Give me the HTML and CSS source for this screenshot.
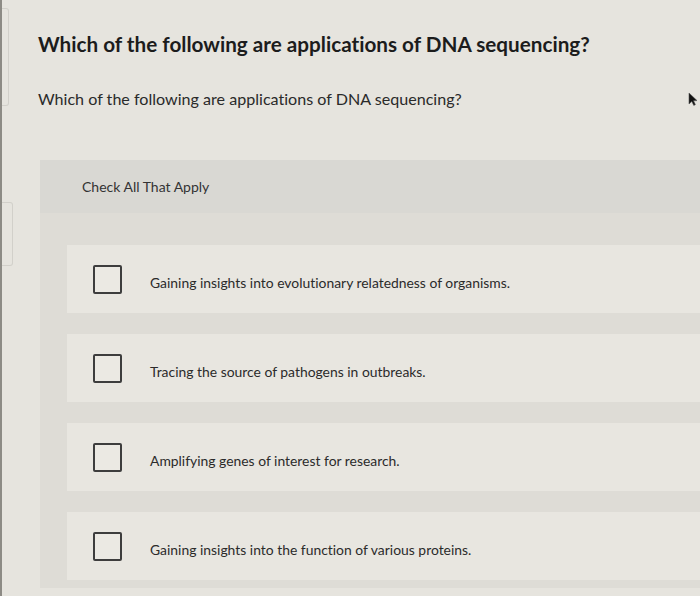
FILE: index.html
```html
<!DOCTYPE html>
<html lang="en">
<head>
<meta charset="utf-8">
<title>Check All That Apply</title>
<link rel="stylesheet" href="styles.css">
</head>
<body>
<div class="screen">
  <div class="edge">
    <div class="tab tab-top"></div>
    <div class="tab tab-mid"></div>
  </div>
  <main class="content">
    <h1 class="title">Which of the following are applications of DNA sequencing?</h1>
    <p class="prompt">Which of the following are applications of DNA sequencing?</p>
    <section class="panel">
      <div class="panel-head">Check All That Apply</div>
      <ul class="options">
        <li class="option"><span class="box"></span><span class="label">Gaining insights into evolutionary relatedness of organisms.</span></li>
        <li class="option"><span class="box"></span><span class="label">Tracing the source of pathogens in outbreaks.</span></li>
        <li class="option"><span class="box"></span><span class="label">Amplifying genes of interest for research.</span></li>
        <li class="option"><span class="box"></span><span class="label">Gaining insights into the function of various proteins.</span></li>
      </ul>
    </section>
  </main>
  <svg class="cursor" width="10" height="14" viewBox="0 0 10 14"><path d="M1 1 L1 12 L3.8 9.4 L5.8 13.4 L7.4 12.6 L5.5 8.8 L9 8.6 Z" fill="#111" stroke="#555" stroke-width="0.6"/></svg>
</div>
</body>
</html>
```

FILE: styles.css
```css
html, body {
  margin: 0;
  padding: 0;
}
body {
  background: #e6e4de;
  font-family: Lato, "Liberation Sans", Arial, sans-serif;
  font-variant-ligatures: none;
  color: #2a2a2a;
}
.screen {
  position: relative;
  display: flex;
  width: 700px;
  height: 596px;
  overflow: hidden;
}
.edge {
  width: 7px;
  flex: none;
  border-left: 2px solid #8d8b85;
  display: flex;
  flex-direction: column;
  padding-top: 8px;
}
.tab {
  border: 1px solid #d2d0ca;
  border-left: none;
  border-radius: 0 3px 3px 0;
}
.tab-top {
  height: 96px;
  width: 6px;
}
.tab-mid {
  margin-top: 96px;
  height: 62px;
  width: 10px;
}
.content {
  flex: 1;
  padding: 32px 0 0 29px;
  display: flex;
  flex-direction: column;
}
.title {
  margin: 0;
  font-size: 20.7px;
  line-height: 24px;
  font-weight: 700;
  color: #1c1c1c;
}
.prompt {
  margin: 33px 0 0;
  font-size: 16.1px;
  line-height: 20px;
  color: #2a2a2a;
}
.panel {
  margin: 51px 0 0 2px;
  background: #dedcd6;
  padding-bottom: 8px;
}
.panel-head {
  background: #d9d8d3;
  height: 53px;
  padding-left: 42px;
  display: flex;
  align-items: center;
  font-size: 14px;
  color: #333;
}
.options {
  list-style: none;
  margin: 0;
  padding: 32px 0 0 27px;
  display: flex;
  flex-direction: column;
  gap: 21px;
}
.option {
  height: 68px;
  background: #e8e6e0;
  display: flex;
  align-items: center;
  padding-left: 26px;
}
.box {
  width: 25px;
  height: 25px;
  border: 2.5px solid #3d3d3d;
  border-radius: 2px;
  background: #ebe9e3;
  flex: none;
}
.label {
  margin: 6px 0 0 28px;
  font-size: 13.9px;
  color: #2b2b2b;
}
.cursor {
  position: absolute;
  left: 688px;
  top: 92px;
}
```
